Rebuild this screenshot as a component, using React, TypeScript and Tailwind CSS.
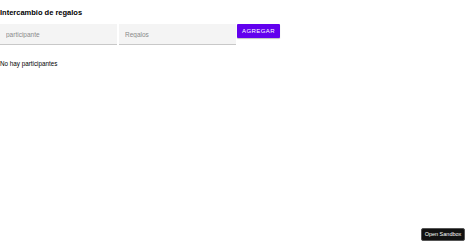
export default function App() {
  return (
    <div className="relative h-[248px] w-[474px] bg-white font-['Liberation_Sans',Arial,sans-serif] text-black">
      <h1 className="pt-[8px] text-[7.5px] font-bold leading-[9px]">Intercambio de regalos</h1>

      <div className="mt-[7px] flex items-start">
        <input
          placeholder="participante"
          className="h-[21px] w-[117px] border-b border-[#c8c8c8] bg-[#f4f4f4] px-[6px] text-[6.5px] outline-none placeholder:text-[#8a8a8a]"
        />
        <input
          placeholder="Regalos"
          className="ml-[2px] h-[21px] w-[117px] border-b border-[#c8c8c8] bg-[#f4f4f4] px-[6px] text-[6.5px] outline-none placeholder:text-[#8a8a8a]"
        />
        <button className="ml-[1px] h-[14px] w-[43px] rounded-[1px] bg-[#6200ee] text-[6px] tracking-[0.4px] text-white shadow-[0_1px_1px_rgba(0,0,0,0.25)]">
          AGREGAR
        </button>
      </div>

      <p className="mt-[14px] text-[6.3px] leading-[10px]">No hay participantes</p>

      <button className="absolute left-[421px] top-[228px] h-[13px] w-[44px] rounded-[2px] border border-[#555] bg-[#111] text-[5.5px] text-white">
        Open Sandbox
      </button>
    </div>
  );
}
